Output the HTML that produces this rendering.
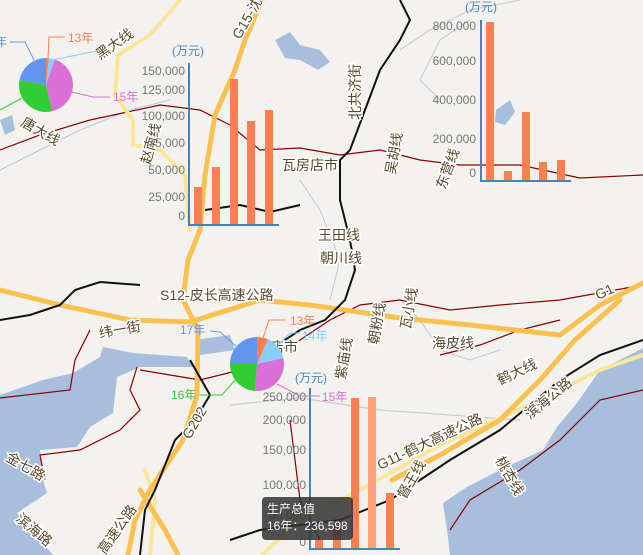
<!DOCTYPE html>
<html><head><meta charset="utf-8"><style>
html,body{margin:0;padding:0;width:643px;height:555px;overflow:hidden;background:#f3f2ee;}
svg{display:block;font-family:"Liberation Sans","Noto Sans CJK SC",sans-serif;}
.lab{font-size:14px;fill:#5a4a2a;stroke:#fff;stroke-width:3px;paint-order:stroke;}
.ax{font-size:12px;fill:#777;}
.tip{font-size:12px;fill:#fff;}
</style></head><body>
<svg width="643" height="555" viewBox="0 0 643 555">
<g fill="#a7bedd">
<path d="M0,395 L43,380 L73,373 L100,357 L103,347 L133,353 L187,357 L193,367 L140,367 L117,377 L113,413 L90,427 L77,447 L40,450 L43,480 L47,493 L17,513 L40,540 L53,555 L0,555Z"/>
<path d="M643,348 L600,370 L577,403 L557,427 L543,450 L500,470 L467,487 L443,503 L447,530 L450,555 L643,555Z"/>
<path d="M275,40 L290,32 L300,45 L320,50 L330,62 L318,70 L300,60 L285,58Z"/>
<path d="M496,110 L510,100 L515,112 L505,125 L495,122Z"/>
<path d="M195,340 L230,335 L235,350 L200,355Z"/>
<path d="M0,120 L12,115 L15,130 L5,135Z"/>
</g>
<g fill="none" stroke="#b5c8e2" stroke-width="1">
<path d="M0,170 L40,150 L80,130 L130,110 L170,100"/>
<path d="M300,180 L320,210 L340,260 L330,300"/>
<path d="M400,300 L420,320 L440,350 L470,360 L500,350"/>
<path d="M440,100 L420,80 L440,40 L470,20"/>
</g>
<g fill="none" stroke="#ccc" stroke-width="1.2">
<path d="M400,50 L430,30 L470,10 L520,0"/>
<path d="M230,405 L300,398 L380,410 L450,415 L520,420"/>
</g>
<g fill="none" stroke="#8b0000" stroke-width="1.2">
<path d="M0,150 L40,135 L90,120 L160,105 L200,110 L230,125 L260,150 L300,148 L340,155 L380,150 L420,160 L460,165 L520,165 L580,178 L643,175"/>
<path d="M90,330 L75,360 L70,390 L0,398"/>
<path d="M137,367 L130,390 L140,410 L120,430 L80,450 L40,455 L45,480"/>
<path d="M140,370 L200,380 L240,370 L300,340 L330,320 L360,305 L400,300 L450,310 L500,305 L560,300 L643,285"/>
<path d="M440,355 L480,345 L520,330 L560,320"/>
<path d="M290,420 L295,460 L300,500 L320,540"/>
<path d="M450,530 L470,500 L520,470 L560,440 L600,400 L643,390"/>
</g>
<g fill="none" stroke="#fae69a" stroke-width="4" stroke-linecap="round">
<path d="M180,0 L150,35 L118,55 L115,95 L133,120 L133,145 L160,150 L185,175 L190,230"/>
<path d="M262,555 L300,520 L360,490 L440,445 L540,400 L600,370 L643,355"/>
<path d="M150,555 L155,500 L145,470"/>
</g>
<g fill="none" stroke="#fbc150" stroke-width="5" stroke-linecap="round">
<path d="M262,0 L245,40 L235,70 L215,115 L205,175 L200,230 L188,260 L183,300 L198,330 L197,395 L183,440 L150,490 L135,520 L128,555"/>
<path d="M0,290 L60,305 L130,320 L190,322 L260,300 L310,305 L400,318 L470,325 L560,335 L600,305 L643,283"/>
<path d="M392,480 L440,455 L500,420 L540,380 L575,340 L620,300"/>
<path d="M140,490 L165,530 L178,555"/>
</g>
<g fill="none" stroke="#111" stroke-width="2">
<path d="M400,0 L410,20 L400,40 L380,70 L365,110 L350,150 L340,160 L340,200 L350,240 L355,270 L345,300 L325,320 L300,330 L270,350"/>
<path d="M0,320 L30,315 L60,305 L75,290 L100,282 L140,285"/>
<path d="M190,360 L210,395 L195,420 L175,440 L155,490 L145,510 L140,555"/>
<path d="M230,540 L260,530 L300,525 L340,520 L390,500 L420,480 L450,460 L500,430 L560,380 L600,355 L643,340"/>
<path d="M205,210 L240,205 L270,212 L300,205"/>
</g>
<g class="lab">
<text x="100" y="60" transform="rotate(-35 100 60)">黑大线</text>
<text x="20" y="125" transform="rotate(30 20 125)">唐大线</text>
<text x="150" y="165" transform="rotate(-75 150 165)">赵南线</text>
<text x="240" y="40" transform="rotate(-60 240 40)">G15-沈</text>
<text x="282" y="170">瓦房店市</text>
<text x="350" y="110" transform="rotate(-90 360 110)">北共济街</text>
<text x="395" y="175" transform="rotate(-80 395 175)">吴胡线</text>
<text x="445" y="190" transform="rotate(-70 445 190)">东营线</text>
<text x="318" y="240">王田线</text>
<text x="320" y="263">朝川线</text>
<text x="160" y="300">S12-皮长高速公路</text>
<text x="100" y="338" transform="rotate(-10 100 338)">纬一街</text>
<text x="270" y="352">店市</text>
<text x="345" y="380" transform="rotate(-80 345 380)">紫庙线</text>
<text x="378" y="345" transform="rotate(-80 378 345)">朝粉线</text>
<text x="410" y="330" transform="rotate(-80 410 330)">瓦小线</text>
<text x="432" y="348">海皮线</text>
<text x="190" y="440" transform="rotate(-60 190 440)">G202</text>
<text x="380" y="470" transform="rotate(-25 380 470)">G11-鹤大高速公路</text>
<text x="500" y="385" transform="rotate(-25 500 385)">鹤大线</text>
<text x="530" y="420" transform="rotate(-40 530 420)">滨海公路</text>
<text x="495" y="460" transform="rotate(60 495 460)">桃杏线</text>
<text x="405" y="500" transform="rotate(-60 405 500)">督王线</text>
<text x="5" y="460" transform="rotate(30 5 460)">金七路</text>
<text x="15" y="520" transform="rotate(40 15 520)">滨海路</text>
<text x="105" y="555" transform="rotate(-55 105 555)">高速公路</text>
<text x="598" y="300" transform="rotate(-25 598 300)">G1</text>
</g>
<g>
<text x="172" y="55" font-size="12" fill="#4a88c0">(万元)</text>
<g class="ax" text-anchor="end">
<text x="185" y="75">150,000</text><text x="185" y="94">125,000</text><text x="185" y="120">100,000</text>
<text x="185" y="147">75,000</text><text x="185" y="174">50,000</text><text x="185" y="201">25,000</text><text x="185" y="220">0</text>
</g>
<g fill="#ff7f50">
<rect x="194" y="187" width="8" height="37"/><rect x="212" y="167" width="8" height="57"/>
<rect x="230" y="79" width="8" height="145"/><rect x="247" y="121" width="8" height="103"/><rect x="265" y="110" width="8" height="114"/>
</g>
<path d="M189,63 V225 H279" fill="none" stroke="#4682b4" stroke-width="2"/>
</g>
<g>
<text x="465" y="11" font-size="12" fill="#4a88c0">(万元)</text>
<g class="ax" text-anchor="end">
<text x="476" y="30">800,000</text><text x="476" y="65">600,000</text><text x="476" y="104">400,000</text>
<text x="476" y="143">200,000</text><text x="476" y="177">0</text>
</g>
<g fill="#ff7f50">
<rect x="486" y="22" width="8" height="158"/><rect x="504" y="171" width="8" height="9"/>
<rect x="522" y="112" width="8" height="68"/><rect x="539" y="162" width="8" height="18"/><rect x="557" y="160" width="8" height="20"/>
</g>
<path d="M481,20 V181 H571" fill="none" stroke="#4682b4" stroke-width="2"/>
</g>
<g>
<text x="295" y="382" font-size="12" fill="#4a88c0">(万元)</text>
<g class="ax" text-anchor="end">
<text x="306" y="401">250,000</text><text x="306" y="424">200,000</text><text x="306" y="454">150,000</text>
<text x="306" y="489">100,000</text><text x="306" y="519">50,000</text><text x="306" y="546">0</text>
</g>
<g fill="#ff7f50">
<rect x="315" y="540" width="8" height="9"/><rect x="333" y="525" width="8" height="24"/>
<rect x="351" y="398" width="8" height="151"/><rect x="368" y="397" width="8" height="152" fill="#ffa07a"/><rect x="386" y="493" width="8" height="56"/>
</g>
<path d="M310,388 V549 H400" fill="none" stroke="#4682b4" stroke-width="2"/>
</g>
<g transform="translate(46,85)">
<path d="M0,0 L0,-27 A27,27 0 0 1 3,-26.8Z" fill="#ff7f50"/>
<path d="M0,0 L3,-26.8 A27,27 0 0 1 9,-25.5Z" fill="#87cefa"/>
<path d="M0,0 L9,-25.5 A27,27 0 0 1 6,26.3Z" fill="#da70d6"/>
<path d="M0,0 L6,26.3 A27,27 0 0 1 -26.5,-5Z" fill="#32cd32"/>
<path d="M0,0 L-26.5,-5 A27,27 0 0 1 0,-27Z" fill="#6495ed"/>
</g>
<g fill="none" stroke-width="1">
<path d="M48,58 L49,37 L65,37" stroke="#ff7f50"/>
<path d="M52,60 L97,51" stroke="#87cefa"/>
<path d="M72,92 L93,97 L110,97" stroke="#da70d6"/>
<path d="M34,60 L25,42 L10,42" stroke="#6495ed"/>
<path d="M22,98 L0,110" stroke="#32cd32"/>
</g>
<text x="68" y="42" font-size="12" fill="#ff7f50">13年</text>
<text x="113" y="101" font-size="12" fill="#da70d6">15年</text>
<text x="-5" y="46" font-size="12" fill="#6495ed">年</text>
<g transform="translate(257,364)">
<path d="M0,0 L0,-27 A27,27 0 0 1 11,-24.7Z" fill="#ff7f50"/>
<path d="M0,0 L11,-24.7 A27,27 0 0 1 26.3,-6Z" fill="#87cefa"/>
<path d="M0,0 L26.3,-6 A27,27 0 0 1 -2,27Z" fill="#da70d6"/>
<path d="M0,0 L-2,27 A27,27 0 0 1 -27,0Z" fill="#32cd32"/>
<path d="M0,0 L-27,0 A27,27 0 0 1 0,-27Z" fill="#6495ed"/>
</g>
<g fill="none" stroke-width="1">
<path d="M263,338 L269,320 L285,320" stroke="#ff7f50"/>
<path d="M278,345 L290,333 L300,333" stroke="#87cefa"/>
<path d="M277,384 L300,396 L320,396" stroke="#da70d6"/>
<path d="M236,379 L222,395 L200,395" stroke="#32cd32"/>
<path d="M236,346 L220,332 L210,331" stroke="#6495ed"/>
</g>
<text x="290" y="325" font-size="12" fill="#ff7f50">13年</text>
<text x="302" y="340" font-size="12" fill="#87cefa">14年</text>
<text x="322" y="401" font-size="12" fill="#da70d6">15年</text>
<text x="171" y="399" font-size="12" fill="#32cd32">16年</text>
<text x="180" y="334" font-size="12" fill="#6495ed">17年</text>
<rect x="262" y="497" width="91" height="43" rx="4" fill="rgba(50,50,50,0.85)"/>
<text x="267" y="513" class="tip">生产总值</text>
<text x="267" y="530" class="tip">16年：236,598</text>
</svg>
</body></html>
